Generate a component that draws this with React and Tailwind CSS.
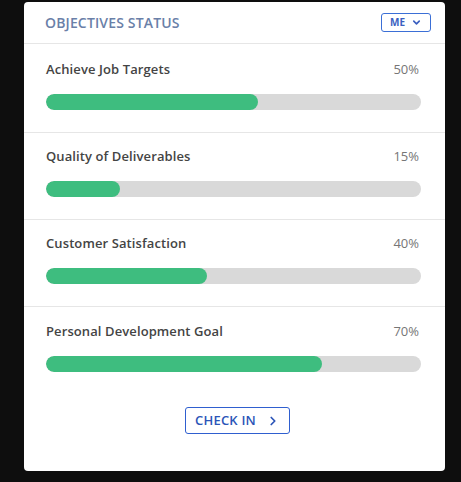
import React from 'react'
import { ChevronDown, ChevronRight } from 'lucide-react'

const objectives = [
    { name: 'Achieve Job Targets', pct: 50, fill: 0.565 },
    { name: 'Quality of Deliverables', pct: 15, fill: 0.197 },
    { name: 'Customer Satisfaction', pct: 40, fill: 0.43 },
    { name: 'Personal Development Goal', pct: 70, fill: 0.736 },
]

const Row = ({ item, first, last }) => (
    <div className={`pl-[22px] pr-[24px] pb-[22px] ${first ? 'pt-[18px]' : last ? 'pt-[17px]' : 'pt-4'} ${last ? '' : 'border-b border-[#e6e6e6]'}`}>
        <div className='flex justify-between items-center h-4 pr-[2px]'>
            <span className='text-[13px] font-semibold tracking-[0.1px] text-[#444444]'>{item.name}</span>
            <span className='text-[13px] text-[#767676]'>{item.pct}%</span>
        </div>
        <div className='mt-4 h-4 rounded-full bg-[#d9d9d9] overflow-hidden'>
            <div className='h-full rounded-full bg-[#3ebd7f]' style={{ width: `${item.fill * 100}%` }} />
        </div>
    </div>
)

export default function App() {
    return (
        <div className='min-h-[482px] bg-[#0e0e0e] pt-[2px] pl-[24px]' style={{ fontFamily: '"Open Sans", "Noto Sans", sans-serif' }}>
            <div className='w-[421px] h-[469px] bg-white rounded-[4px] flex flex-col'>
                <div className='h-[42px] flex items-center justify-between pl-[21px] pr-[14px] border-b border-[#e6e6e6]'>
                    <span className='text-[14px] font-semibold text-[#6a80a8] tracking-[0.15px]'>OBJECTIVES STATUS</span>
                    <button className='w-[50px] h-[19px] border border-[#3b6fd6] rounded-[3px] flex items-center justify-center gap-[6px] text-[10px] font-bold text-[#3b5fc0]'>
                        ME <ChevronDown size={11} strokeWidth={3.5} />
                    </button>
                </div>
                {objectives.map((o, i) => (
                    <Row key={o.name} item={o} first={i === 0} last={i === objectives.length - 1} />
                ))}
                <div className='flex justify-center mt-[13px]'>
                    <button className='ml-[6px] w-[105px] h-[27px] border border-[#2f5fcf] rounded-[3px] flex items-center justify-center gap-[10px] text-[13px] font-semibold tracking-[0.2px] text-[#2c55b8]'>
                        CHECK IN <ChevronRight size={14} strokeWidth={3} />
                    </button>
                </div>
            </div>
        </div>
    )
}
